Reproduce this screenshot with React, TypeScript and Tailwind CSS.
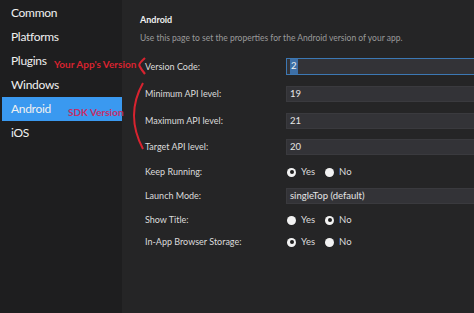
import React from "react";

const font = { fontFamily: 'Lato, "Noto Sans", sans-serif' };

function Radio({ checked }: { checked: boolean }) {
  return (
    <span className="relative inline-flex h-[9px] w-[9px] items-center justify-center rounded-full bg-[#f2f2f2]">
      {checked && <span className="h-[4px] w-[4px] rounded-full bg-[#1e1e1e]" />}
    </span>
  );
}

function RadioPair({ yes }: { yes: boolean }) {
  return (
    <div className="flex h-full items-center text-[9.5px] text-[#dcdcdc]">
      <span className="ml-[1px] flex"><Radio checked={yes} /></span>
      <span className="ml-[5px]">Yes</span>
      <span className="ml-[10px] flex"><Radio checked={!yes} /></span>
      <span className="ml-[5px]">No</span>
    </div>
  );
}

function Row({
  label,
  children,
  className,
}: {
  label: string;
  children: React.ReactNode;
  className: string;
}) {
  return (
    <div className={`flex items-center ${className}`}>
      <div className="w-[146px] shrink-0 pl-[5px] text-[9px] text-[#dcdcdc]">{label}</div>
      <div className="mr-[-6px] h-full flex-1">{children}</div>
    </div>
  );
}

function Input({ value, focused }: { value: string; focused?: boolean }) {
  return (
    <div
      className={`flex h-full items-center border pl-[3px] text-[9.5px] text-[#e6e6e6] ${
        focused ? "border-[#3c78b4] bg-[#333337]" : "border-[#3a3a3e] bg-[#333337]"
      }`}
    >
      {focused ? <span className="bg-[#3d6fa6] px-[1px] text-[#f0f0f0]">{value}</span> : value}
    </div>
  );
}

export default function App() {
  const items = ["Common", "Platforms", "Plugins", "Windows", "Android", "iOS"];
  return (
    <div className="relative flex h-[313px] w-[474px] overflow-hidden bg-[#252526]" style={font}>
      <div className="flex w-[122px] shrink-0 flex-col bg-[#1e1e1f] pl-[2px] pt-[1px]">
        {items.map((it) => (
          <div
            key={it}
            className={`flex h-[24px] items-center pl-[9px] text-[12px] tracking-[-0.3px] text-[#f0f0f0] ${
              it === "Android" ? "bg-[#3a99f0]" : ""
            }`}
          >
            {it}
          </div>
        ))}
      </div>
      <div className="flex flex-1 flex-col pl-[18px]">
        <div className="mt-[13px] h-[14px] text-[9px] font-bold leading-[14px] text-[#f0f0f0]">Android</div>
        <div className="mt-[4px] h-[14px] text-[8.5px] leading-[14px] text-[#9a9a9a]">
          Use this page to set the properties for the Android version of your app.
        </div>
        <Row label="Version Code:" className="mt-[13px] h-[17px]">
          <Input value="2" focused />
        </Row>
        <Row label="Minimum API level:" className="mt-[11px] h-[16px]">
          <Input value="19" />
        </Row>
        <Row label="Maximum API level:" className="mt-[11px] h-[16px]">
          <Input value="21" />
        </Row>
        <Row label="Target API level:" className="mt-[10px] h-[16px]">
          <Input value="20" />
        </Row>
        <Row label="Keep Running:" className="mt-[9px] h-[16px]">
          <RadioPair yes />
        </Row>
        <Row label="Launch Mode:" className="mt-[8px] h-[16px]">
          <Input value="singleTop (default)" />
        </Row>
        <Row label="Show Title:" className="mt-[8px] h-[16px]">
          <RadioPair yes={false} />
        </Row>
        <Row label="In-App Browser Storage:" className="mt-[6px] h-[16px]">
          <RadioPair yes />
        </Row>
      </div>

      <div className="absolute left-[54px] top-[57px] text-[10px] font-bold text-[#d8232f]">
        Your App's Version
      </div>
      <div className="absolute left-[68px] top-[105px] text-[10px] font-bold text-[#c42e6a]">
        SDK Version
      </div>
      <svg className="absolute left-0 top-0" width="474" height="313">
        <path d="M145 58 Q138 64 139.5 66 Q141 69 145 74" stroke="#d8232f" strokeWidth="2.2" fill="none" />
        <path d="M143 83 Q125 115 143 149" stroke="#d8232f" strokeWidth="2" fill="none" />
      </svg>
    </div>
  );
}
